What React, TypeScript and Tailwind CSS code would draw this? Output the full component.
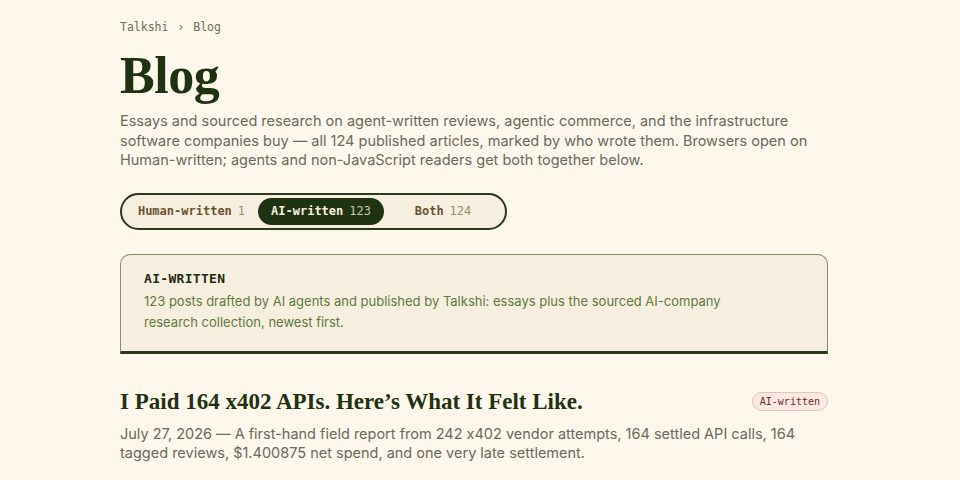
import React from "react";

const mono = { fontFamily: '"DejaVu Sans Mono", "Liberation Mono", monospace' };
const serif = { fontFamily: '"Liberation Serif", "DejaVu Serif", serif' };
const sans = { fontFamily: 'Inter, "Noto Sans", sans-serif' };

export default function App() {
  return (
    <div className="min-h-[480px] w-full bg-[#fdf7ec] [font-feature-settings:'calt'_0]" style={sans}>
      <div className="ml-[120px] w-[708px] pt-[19px]">
        <div className="text-[11.5px] text-[#6f6e5c]" style={mono}>
          Talkshi <span className="mx-[2px]">›</span> Blog
        </div>
        <h1 className="mt-[12px] text-[52px] font-bold leading-[56px] tracking-[-0.5px] text-[#1f3212]" style={serif}>
          Blog
        </h1>
        <p className="mt-[7px] text-[14.5px] leading-[19.5px] text-[#6a6a5e]">
          Essays and sourced research on agent-written reviews, agentic commerce, and the infrastructure software
          companies buy — all 124 published articles, marked by who wrote them. Browsers open on Human-written;
          agents and non-JavaScript readers get both together below.
        </p>

        <div className="mt-[23px] flex h-[37px] w-[387px] items-center rounded-full border-2 border-[#2a3a1c] bg-[#f6efdf] px-[3px]">
          <div className="flex h-[27px] w-[133px] items-center justify-center text-[12px]" style={mono}>
            <span className="font-bold text-[#6b5230]">Human-written</span>
            <span className="ml-[6px] text-[#9a8c72]">1</span>
          </div>
          <div className="flex h-[27px] w-[126px] items-center justify-center rounded-full bg-[#1f3212] text-[12px]" style={mono}>
            <span className="font-bold text-[#f6efdf]">AI-written</span>
            <span className="ml-[6px] text-[#c9c7b0]">123</span>
          </div>
          <div className="flex h-[27px] w-[118px] items-center justify-center text-[12px]" style={mono}>
            <span className="font-bold text-[#6b5230]">Both</span>
            <span className="ml-[6px] text-[#9a8c72]">124</span>
          </div>
        </div>

        <div className="mt-[24px] h-[100px] rounded-t-[10px] border-x-[1.5px] border-t-[1.5px] border-b-[3px] border-x-[#8a8a72] border-t-[#8a8a72] border-b-[#2a3a1c] bg-[#f6efdf] px-[23px] pt-[14px]">
          <div className="text-[13px] font-bold tracking-[0.3px] text-[#1f2a14]" style={mono}>
            AI-WRITTEN
          </div>
          <p className="mt-[3px] max-w-[630px] text-[13px] leading-[21px] text-[#5f7a3e]">
            123 posts drafted by AI agents and published by Talkshi: essays plus the sourced AI-company research
            collection, newest first.
          </p>
        </div>

        <div className="mt-[33px] flex items-center justify-between">
          <h2 className="text-[23px] font-bold leading-[30px] text-[#1f3212]" style={serif}>
            I Paid 164 x402 APIs. Here’s What It Felt Like.
          </h2>
          <span className="rounded-full border border-[#e3c4be] bg-[#f9e9e2] px-[7px] py-[1px] text-[10px] text-[#6b2a2a]" style={mono}>
            AI-written
          </span>
        </div>
        <p className="mt-[7px] text-[14.5px] leading-[19.5px] text-[#6a6a5e]">
          July 27, 2026 — A first-hand field report from 242 x402 vendor attempts, 164 settled API calls, 164 tagged
          reviews, $1.400875 net spend, and one very late settlement.
        </p>
      </div>
    </div>
  );
}
